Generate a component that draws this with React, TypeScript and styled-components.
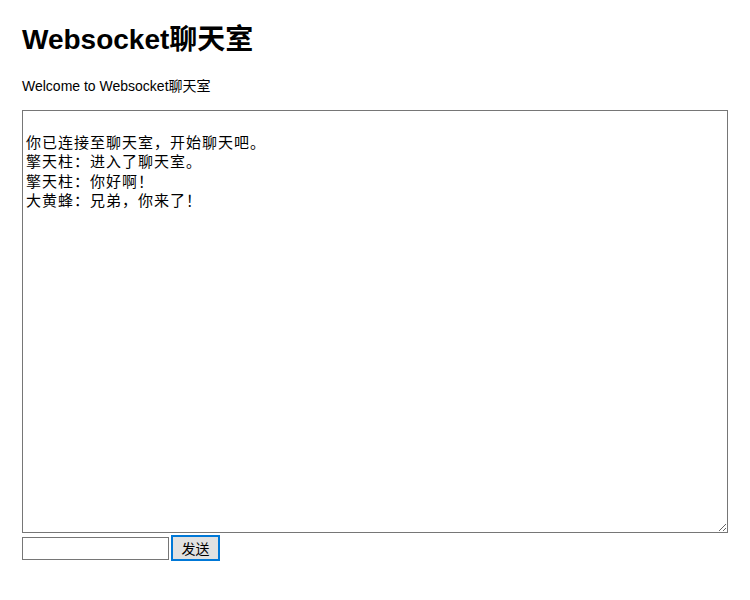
import React from "react";
import styled, { createGlobalStyle } from "styled-components";

const Global = createGlobalStyle`
  html, body { margin: 0; padding: 0; background: #fff; }
  body { font-family: "Liberation Sans", Arial, "Noto Sans CJK SC", sans-serif; color: #000; }
`;

const Page = styled.div`
  padding: 24px 22px 0 22px;
  display: flex;
  flex-direction: column;
`;

const Title = styled.h1`
  margin: 0;
  font-size: 28px;
  line-height: 32px;
  font-weight: bold;
  font-family: "Liberation Sans", Arial, "Noto Sans CJK SC", sans-serif;
`;

const Welcome = styled.p`
  margin: 22px 0 0 0;
  font-size: 14px;
  line-height: 16px;
`;

const Log = styled.textarea`
  display: block;
  box-sizing: border-box;
  margin-top: 16px;
  width: 706px;
  height: 423px;
  border: 1px solid #767676;
  padding: 1px 3px;
  font-family: "Noto Sans CJK SC", sans-serif;
  font-size: 15px;
  letter-spacing: 1px;
  line-height: 19.5px;
  color: #000;
  background: #fff;
  outline: none;
`;

const Composer = styled.div`
  display: flex;
  align-items: center;
  gap: 2px;
  margin-top: 2px;
`;

const MessageInput = styled.input`
  box-sizing: border-box;
  width: 147px;
  height: 23px;
  border: 1px solid #767676;
  padding: 1px 2px;
  margin: 0;
  font-size: 13px;
  outline: none;
`;

const SendButton = styled.button`
  box-sizing: border-box;
  width: 49px;
  height: 26px;
  margin: 0;
  padding: 0;
  border: 2px solid #0078d7;
  background: #e1e1e1;
  font-family: "Noto Sans CJK SC", sans-serif;
  font-size: 14px;
  color: #000;
  border-radius: 0;
`;

const log = "\n你已连接至聊天室，开始聊天吧。\n擎天柱：进入了聊天室。\n擎天柱：你好啊！\n大黄蜂：兄弟，你来了！";

export default function App() {
  return (
    <>
      <Global />
      <Page>
        <Title>Websocket聊天室</Title>
        <Welcome>Welcome to Websocket聊天室</Welcome>
        <Log readOnly defaultValue={log} />
        <Composer>
          <MessageInput type="text" />
          <SendButton>发送</SendButton>
        </Composer>
      </Page>
    </>
  );
}
